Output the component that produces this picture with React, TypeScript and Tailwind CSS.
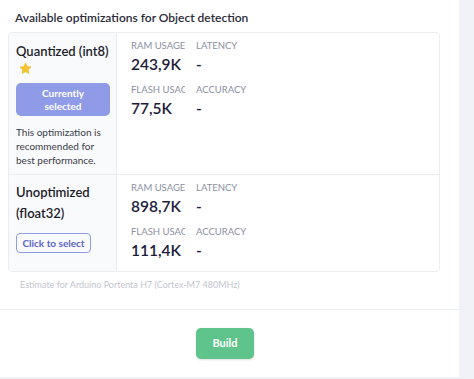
import React from "react";

function Star() {
  return (
    <svg width="13" height="13" viewBox="0 0 24 24" className="block">
      <path
        d="M12 1.8l3.1 6.6 7.2.9-5.3 5 1.4 7.1L12 17.9l-6.4 3.5 1.4-7.1-5.3-5 7.2-.9z"
        fill="#f4c430"
        stroke="#e8b520"
        strokeWidth="1"
        strokeLinejoin="round"
      />
    </svg>
  );
}

function Metric({ label, value }: { label: string; value: string }) {
  return (
    <div className="flex flex-col">
      <div className="text-[9.5px] leading-[14px] text-[#8b8fa3] uppercase whitespace-nowrap overflow-hidden">
        {label}
      </div>
      <div className="text-[15.5px] leading-[20px] font-semibold text-[#1d1c3b] mt-[1px]">{value}</div>
    </div>
  );
}

function Metrics({ ram, flash }: { ram: string; flash: string }) {
  return (
    <div className="flex-1 pl-[14px] pt-[6px] flex flex-col gap-[9px]">
      <div className="flex">
        <div className="w-[54px] overflow-hidden mr-[11px]">
          <Metric label="RAM USAGE" value={ram} />
        </div>
        <div className="w-[80px]">
          <Metric label="LATENCY" value="-" />
        </div>
      </div>
      <div className="flex">
        <div className="w-[54px] overflow-hidden mr-[11px]">
          <Metric label="FLASH USAGE" value={flash} />
        </div>
        <div className="w-[80px]">
          <Metric label="ACCURACY" value="-" />
        </div>
      </div>
    </div>
  );
}

export default function App() {
  return (
    <div
      className="flex w-[474px] h-[379px] bg-[#f1f2f7]"
      style={{ fontFamily: "Lato, 'Open Sans', sans-serif" }}
    >
      <div className="w-[459px] h-[377px] bg-white flex flex-col">
        <div className="pl-[15px] pt-[10px] h-[32px] text-[12px] leading-[16px] font-semibold text-[#2b2b3a]">
          Available optimizations for Object detection
        </div>
        <div className="ml-[8px] w-[432px] border border-[#ebedf1] rounded-[4px] overflow-hidden flex flex-col">
          <div className="flex h-[142px] border-b border-[#ebedf1]">
            <div className="w-[108px] bg-[#f9fafb] border-r border-[#ebedf1] pl-[7px] pr-[1px] pt-[8px] flex flex-col">
              <div className="text-[13px] leading-[20px] font-semibold text-[#1d1c2b] whitespace-nowrap">
                Quantized (int8)
              </div>
              <div className="pl-[3px] pt-[1px] h-[18px]">
                <Star />
              </div>
              <div className="mt-[4px] w-[94px] h-[33px] rounded-[5px] bg-[#8f9be6] flex items-center justify-center text-center text-white text-[10px] leading-[13px] font-bold">
                Currently
                <br />
                selected
              </div>
              <div className="mt-[9px] text-[10px] leading-[14px] text-[#3a3a4a] pr-[4px]">
                This optimization is recommended for best performance.
              </div>
            </div>
            <Metrics ram="243,9K" flash="77,5K" />
          </div>
          <div className="flex h-[96px]">
            <div className="w-[108px] bg-[#f9fafb] border-r border-[#ebedf1] pl-[7px] pr-[1px] pt-[7px] flex flex-col">
              <div className="text-[13px] leading-[21px] font-semibold text-[#1d1c2b]">
                Unoptimized
                <br />
                (float32)
              </div>
              <div className="mt-[9px] w-[75px] h-[20px] rounded-[4px] border border-[#8f9be6] flex items-center justify-center text-[10px] font-bold text-[#5b65c9]">
                Click to select
              </div>
            </div>
            <Metrics ram="898,7K" flash="111,4K" />
          </div>
        </div>
        <div className="pl-[20px] pt-[6px] h-[37px] text-[9px] leading-[13px] text-[#c3c6cf]">
          Estimate for Arduino Portenta H7 (Cortex-M7 480MHz)
        </div>
        <div className="border-t border-[#eceef2] flex-1 flex justify-center pt-[18px] pr-[9px]">
          <div className="w-[58px] h-[31px] rounded-[5px] bg-[#5ec48b] text-white text-[11px] font-bold flex items-center justify-center shadow-sm">
            Build
          </div>
        </div>
      </div>
    </div>
  );
}
